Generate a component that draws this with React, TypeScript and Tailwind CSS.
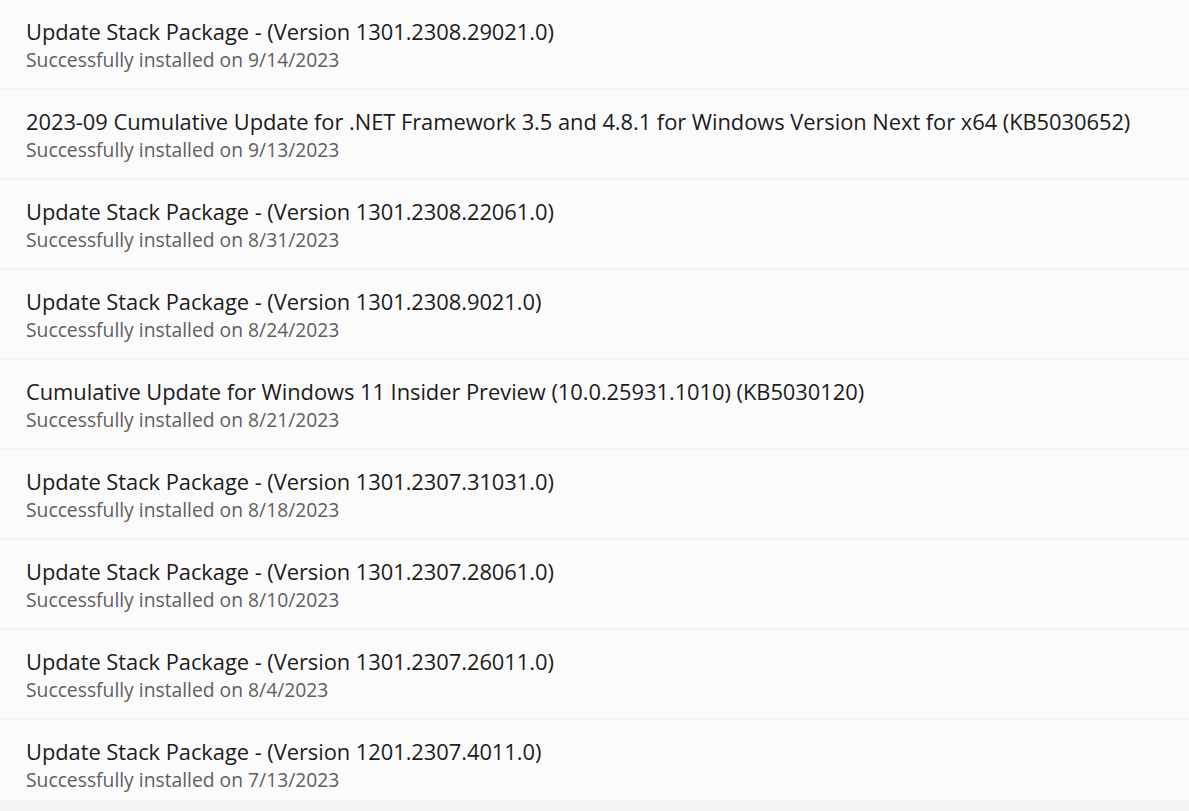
const UPDATES = [
  { title: 'Update Stack Package - (Version 1301.2308.29021.0)', date: '9/14/2023' },
  { title: '2023-09 Cumulative Update for .NET Framework 3.5 and 4.8.1 for Windows Version Next for x64 (KB5030652)', date: '9/13/2023' },
  { title: 'Update Stack Package - (Version 1301.2308.22061.0)', date: '8/31/2023' },
  { title: 'Update Stack Package - (Version 1301.2308.9021.0)', date: '8/24/2023' },
  { title: 'Cumulative Update for Windows 11 Insider Preview (10.0.25931.1010) (KB5030120)', date: '8/21/2023' },
  { title: 'Update Stack Package - (Version 1301.2307.31031.0)', date: '8/18/2023' },
  { title: 'Update Stack Package - (Version 1301.2307.28061.0)', date: '8/10/2023' },
  { title: 'Update Stack Package - (Version 1301.2307.26011.0)', date: '8/4/2023' },
  { title: 'Update Stack Package - (Version 1201.2307.4011.0)', date: '7/13/2023' },
]

export default function App() {
  return (
    <div
      className="w-[1189px] h-[811px] bg-[#f3f3f3] overflow-hidden"
      style={{ fontFamily: '"Open Sans", "Noto Sans", sans-serif' }}
    >
      <div className="flex flex-col gap-[2px]">
        {UPDATES.map((u, i) => (
          <div
            key={i}
            className={`bg-[#fbfbfb] flex flex-col pt-[18px] pl-[26px] ${
              i === UPDATES.length - 1 ? 'h-[80px]' : 'h-[88px]'
            }`}
          >
            <p className="text-[21.9px] leading-[28px] text-[#1b1b1b] tracking-[-0.05px] whitespace-nowrap">{u.title}</p>
            <p className="text-[19.3px] leading-[26px] mt-[1px] text-[#5f5f5f] whitespace-nowrap">
              Successfully installed on {u.date}
            </p>
          </div>
        ))}
      </div>
    </div>
  )
}
